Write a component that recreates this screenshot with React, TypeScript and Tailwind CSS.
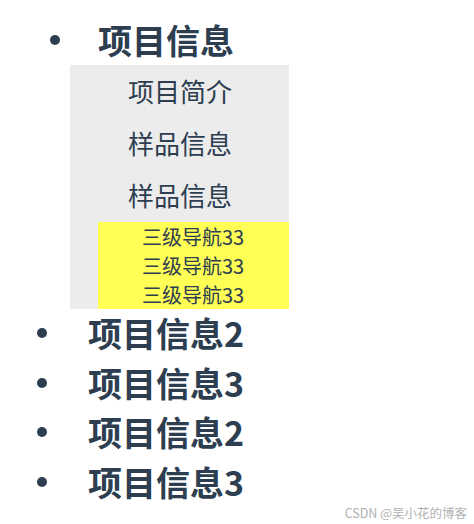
import React from "react";

const font = { fontFamily: '"Noto Sans CJK SC", "Noto Sans", sans-serif' };

function Dot({ cls }: { cls: string }) {
  return <span className={`block w-[10px] h-[10px] rounded-full bg-[#2c3e50] ${cls}`} />;
}

export default function App() {
  const second = ["项目简介", "样品信息", "样品信息"];
  const third = ["三级导航33", "三级导航33", "三级导航33"];
  const bottom = ["项目信息2", "项目信息3", "项目信息2", "项目信息3"];
  return (
    <div className="relative w-[474px] h-[524px] bg-white text-[#2c3e50] overflow-hidden" style={font}>
      <div className="pt-[14px]">
        <div className="flex items-center h-[51px]">
          <Dot cls="ml-[50px]" />
          <span className="ml-[38px] text-[34px] font-bold leading-none">项目信息</span>
        </div>
        <div className="ml-[70px] w-[219px] bg-[#ececec] flex flex-col">
          {second.map((t, i) => (
            <div key={i} className="h-[52px] flex items-center pl-[58px] text-[26px] leading-none">
              {t}
            </div>
          ))}
          <div className="ml-[28px] mt-[1px] bg-[#ffff55] flex flex-col">
            {third.map((t, i) => (
              <div key={i} className="h-[29px] flex items-center pl-[44px] text-[20px] leading-none">
                {t}
              </div>
            ))}
          </div>
        </div>
        <div className="-mt-[1px]">
          {bottom.map((t, i) => (
            <div key={i} className="flex items-center h-[49.7px]">
              <Dot cls="ml-[37px]" />
              <span className="ml-[41px] text-[34px] font-bold leading-none">{t}</span>
            </div>
          ))}
        </div>
      </div>
      <div className="absolute right-[7px] bottom-[5px] text-[12.5px] text-[#b0b0b0] leading-none">CSDN @吴小花的博客</div>
    </div>
  );
}
